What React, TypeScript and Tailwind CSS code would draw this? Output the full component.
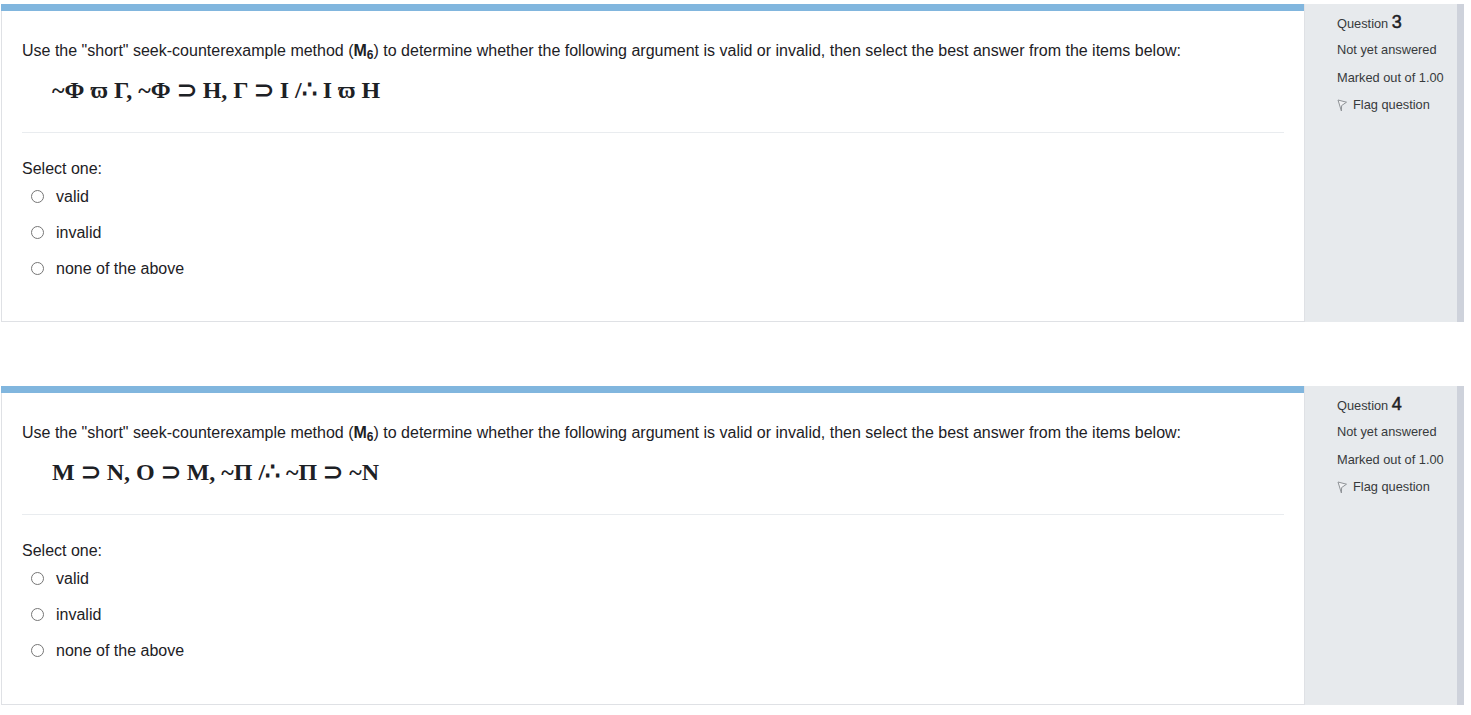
import React from 'react';

interface QuestionProps {
  number: number;
  formula: string;
  heightClass: string;
}

const FlagIcon = () => (
  <svg width="11" height="13" viewBox="0 0 11 13" fill="none" className="shrink-0">
    <path d="M1 1 L9.5 3.2 L4.6 6.6 L4.4 12 Z" stroke="#8f9397" strokeWidth="1" fill="#f1f2f4" strokeLinejoin="round" />
  </svg>
);

const Radio = ({ label }: { label: string }) => (
  <label className="flex items-center h-9 pl-2">
    <span className="w-[13px] h-[13px] rounded-full border border-[#767676] bg-white mr-3 ml-[1px] mb-[2px] shrink-0" />
    <span className="text-[16px] text-[#1d2125]">{label}</span>
  </label>
);

const Question: React.FC<QuestionProps> = ({ number, formula, heightClass }) => (
  <div className={`flex w-[1463px] ml-[1px] ${heightClass}`}>
    <div className="flex-1 flex flex-col border-l border-b border-[#dfe1e5] bg-white">
      <div className="h-[7px] bg-[#81b6de] shrink-0 -ml-px" />
      <div className="flex flex-col pl-[20px] pr-[20px]">
        <p className="mt-[30px] text-[16px] leading-[20px] text-[#1d2125] whitespace-nowrap">
          Use the "short" seek-counterexample method (<b>M<sub className="text-[12px] leading-none">6</sub></b>) to determine whether the following argument is valid or invalid, then select the best answer from the items below:
        </p>
        <p className="mt-[9px] ml-[30px] h-[32px] leading-[40px] text-[24px] font-bold text-[#1d2125] whitespace-nowrap font-['Liberation_Serif',serif]">
          {formula}
        </p>
        <div className="mt-[30px] border-t border-[#e9ecef]" />
        <p className="mt-[26px] text-[16px] leading-[20px] text-[#1d2125]">Select one:</p>
        <div className="flex flex-col">
          <Radio label="valid" />
          <Radio label="invalid" />
          <Radio label="none of the above" />
        </div>
      </div>
    </div>
    <div className="w-[160px] shrink-0 flex bg-[#e7eaed]">
      <div className="flex-1 border-l border-[#dfe1e5] pl-[32px] pt-[8px] text-[12.8px] text-[#373a3c] whitespace-nowrap">
        <div className="h-[20px] leading-[20px]">
          Question <span className="text-[18px] font-normal text-[#1d2125] [-webkit-text-stroke:0.5px_#1d2125]">{number}</span>
        </div>
        <div className="mt-[9px] leading-[18px]">Not yet answered</div>
        <div className="mt-[10px] leading-[18px]">Marked out of 1.00</div>
        <div className="mt-[9px] leading-[18px] flex items-center gap-[5px]">
          <FlagIcon />
          Flag question
        </div>
      </div>
      <div className="w-[7px] bg-[#ced2db]" />
    </div>
  </div>
);

export default function App() {
  return (
    <div className="bg-white min-h-[715px] pt-[4px] flex flex-col gap-[64px] font-['Liberation_Sans',Arial,sans-serif]">
      <Question number={3} heightClass="h-[318px]" formula="~Φ ϖ Γ, ~Φ ⊃ Η, Γ ⊃ Ι /∴ Ι ϖ Η" />
      <Question number={4} heightClass="h-[319px]" formula="Μ ⊃ Ν, Ο ⊃ Μ, ~Π /∴ ~Π ⊃ ~Ν" />
    </div>
  );
}
